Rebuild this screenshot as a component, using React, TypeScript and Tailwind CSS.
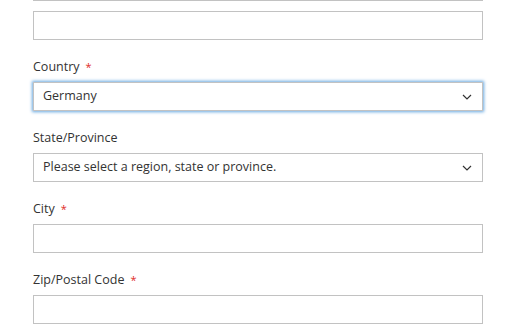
import { ChangeEvent, useState } from 'react';

type FieldProps = {
  label: string;
  required?: boolean;
  children: React.ReactNode;
};

const inputClass =
  'block w-full h-[29px] border border-[#c2c2c2] bg-white px-[9px] text-[12.5px] text-[#333] outline-none rounded-none';

function Field({ label, required, children }: FieldProps) {
  return (
    <div className="mt-[17px]">
      <label className="block h-[20px] leading-[20px] text-[12.5px] text-[#333] mb-[5px]">
        {label}
        {required && <span className="ml-[6px] text-[11px] text-[#e02b27]">*</span>}
      </label>
      {children}
    </div>
  );
}

function Chevron() {
  return (
    <svg
      className="absolute right-[11px] top-1/2 -translate-y-1/2 pointer-events-none"
      width="10"
      height="6"
      viewBox="0 0 10 6"
      fill="none"
    >
      <path d="M1 1l4 4 4-4" stroke="#333" strokeWidth="1.2" />
    </svg>
  );
}

export default function App() {
  const [country, setCountry] = useState('DE');
  const [region, setRegion] = useState('');

  return (
    <div
      className="w-[507px] h-[335px] overflow-hidden bg-white"
      style={{ fontFamily: '"Open Sans", "Liberation Sans", sans-serif' }}
    >
      <div className="w-[450px] ml-[33px]">
        {/* street lines */}
        <input className={`${inputClass} -mt-[28px]`} />
        <input className={`${inputClass} mt-[10px]`} />

        <Field label="Country" required>
          <div className="relative">
            <select
              value={country}
              onChange={(e: ChangeEvent<HTMLSelectElement>) => setCountry(e.target.value)}
              className={`${inputClass} appearance-none shadow-[0_0_3px_1px_#68a8e0] border-[#8aa9c4]`}
            >
              <option value="DE">Germany</option>
              <option value="FR">France</option>
            </select>
            <Chevron />
          </div>
        </Field>

        <Field label="State/Province">
          <div className="relative">
            <select
              value={region}
              onChange={(e: ChangeEvent<HTMLSelectElement>) => setRegion(e.target.value)}
              className={`${inputClass} appearance-none`}
            >
              <option value="">Please select a region, state or province.</option>
            </select>
            <Chevron />
          </div>
        </Field>

        <Field label="City" required>
          <input className={inputClass} />
        </Field>

        <Field label="Zip/Postal Code" required>
          <input className={inputClass} />
        </Field>
      </div>
    </div>
  );
}
